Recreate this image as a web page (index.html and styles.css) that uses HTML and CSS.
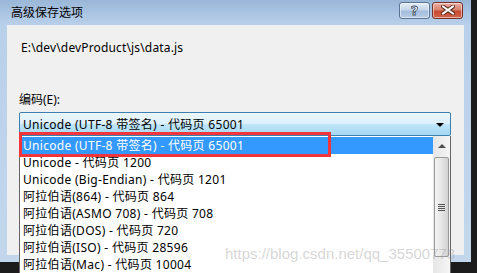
FILE: index.html
```html
<!DOCTYPE html>
<html>
<head>
    <title>高级保存选项</title>
    <link rel="stylesheet" href="styles.css">
</head>
<body>
    <div class="window">
        <div class="titlebar">
            <span class="title">高级保存选项</span>
            <div class="caption-buttons">
                <button class="cap-btn help-btn"><span>?</span></button>
                <button class="cap-btn close-btn">
                    <svg width="14" height="10" viewBox="0 0 14 10">
                        <path d="M2 1.5 L12 8.5 M12 1.5 L2 8.5" stroke="#5a2a22" stroke-width="4" stroke-linecap="square"/>
                        <path d="M2 1.5 L12 8.5 M12 1.5 L2 8.5" stroke="#fff" stroke-width="2" stroke-linecap="square"/>
                    </svg>
                </button>
            </div>
        </div>
        <div class="client">
            <div class="path">E:\dev\devProduct\js\data.js</div>
            <div class="label">编码(E):</div>
            <div class="combo-wrap">
                <div class="combo">
                    <span>Unicode (UTF-8 带签名) - 代码页 65001</span>
                    <span class="arrow"></span>
                </div>
                <div class="dropdown">
                    <ul class="options">
                        <li class="selected">Unicode (UTF-8 带签名) - 代码页 65001</li>
                        <li>Unicode - 代码页 1200</li>
                        <li>Unicode (Big-Endian) - 代码页 1201</li>
                        <li>阿拉伯语(864) - 代码页 864</li>
                        <li>阿拉伯语(ASMO 708) - 代码页 708</li>
                        <li>阿拉伯语(DOS) - 代码页 720</li>
                        <li>阿拉伯语(ISO) - 代码页 28596</li>
                        <li>阿拉伯语(Mac) - 代码页 10004</li>
                    </ul>
                    <div class="scrollbar">
                        <div class="scroll-up"><span class="up-arrow"></span></div>
                        <div class="thumb"><span class="grip"></span></div>
                    </div>
                </div>
                <div class="mark"></div>
            </div>
        </div>
    </div>
    <div class="watermark">https://blog.csdn.net/qq_35500778</div>
</body>
</html>
```

FILE: styles.css
```css
body {
    margin: 0;
    padding: 0;
    width: 477px;
    height: 273px;
    overflow: hidden;
    background-color: #1c1c1c;
    font-family: "Noto Sans", "Noto Sans CJK SC", sans-serif;
    font-size: 12px;
    position: relative;
}

.window {
    width: 457px;
    height: 255px;
    padding: 0 7px 7px 7px;
    background: linear-gradient(to bottom, #9ab7d8 0px, #b9d0ea 25px, #c3d7ec 100%);
}

.titlebar {
    height: 25px;
    display: flex;
    align-items: center;
    justify-content: space-between;
}

.title {
    margin-left: 4px;
    margin-top: -2px;
    color: #000;
    font-family: "Noto Sans CJK SC", sans-serif;
    font-size: 12px;
}

.caption-buttons {
    display: flex;
    gap: 2px;
    margin-top: -5px;
    margin-right: 1px;
}

.cap-btn {
    width: 31px;
    height: 17px;
    padding: 0;
    border-radius: 3px;
    display: flex;
    align-items: center;
    justify-content: center;
    box-shadow: inset 0 0 0 1px rgba(255, 255, 255, 0.5);
}

.help-btn {
    border: 1px solid #5a7394;
    background: linear-gradient(to bottom, #e6eef7 0%, #c5d6ea 45%, #a3bddd 55%, #b8cde6 100%);
}

.help-btn span {
    color: #fff;
    font-family: "DejaVu Sans", sans-serif;
    font-weight: bold;
    font-size: 13px;
    line-height: 13px;
    -webkit-text-stroke: 0.8px #3a4a60;
}

.close-btn {
    border: 1px solid #7a3024;
    background: linear-gradient(to bottom, #ebb0a3 0%, #d9826f 45%, #c9472f 55%, #d0654c 100%);
}

.client {
    height: 230px;
    background-color: #f0f0f0;
    padding: 0 13px 0 12px;
}

.path {
    padding-top: 15px;
    padding-left: 2px;
    line-height: 16px;
    letter-spacing: 0.15px;
    color: #000;
}

.label {
    margin-top: 36px;
    line-height: 16px;
    color: #000;
}

.combo-wrap {
    position: relative;
    margin-top: 4px;
    letter-spacing: 0.3px;
}

.combo {
    height: 22px;
    border: 1px solid #3c7fb1;
    border-radius: 2px;
    background: linear-gradient(to bottom, #ecf7fd 0%, #dcf0fc 48%, #bee5f8 52%, #a6d8f2 100%);
    display: flex;
    align-items: center;
    justify-content: space-between;
    padding: 0 6px 0 3px;
}

.arrow {
    width: 0;
    height: 0;
    border-left: 4px solid transparent;
    border-right: 4px solid transparent;
    border-top: 4px solid #000;
    margin-top: 1px;
}

.dropdown {
    position: absolute;
    top: 24px;
    left: 0;
    width: 430px;
    height: 140px;
    border: 1px solid #646464;
    border-top: 0;
    background-color: #fff;
    display: flex;
}

.options {
    list-style-type: none;
    margin: 0;
    padding: 1px 0 0 0;
    flex: 1;
}

.options li {
    height: 17px;
    line-height: 17px;
    padding-left: 3px;
    color: #000;
    white-space: nowrap;
}

.options li.selected {
    background-color: #3399ff;
    color: #fff;
}

.scrollbar {
    width: 17px;
    background: linear-gradient(to right, #e6e6e6, #f5f5f5);
    display: flex;
    flex-direction: column;
    padding-top: 1px;
}

.scroll-up {
    height: 18px;
    display: flex;
    align-items: center;
    justify-content: center;
}

.up-arrow {
    width: 0;
    height: 0;
    border-left: 4px solid transparent;
    border-right: 4px solid transparent;
    border-bottom: 4px solid #4d4d4d;
}

.thumb {
    margin: 2px 1px 0 1px;
    height: 98px;
    border: 1px solid #9a9a9a;
    border-radius: 2px;
    background: linear-gradient(to right, #f4f4f4, #e6e6e6 50%, #d2d2d2);
    display: flex;
    align-items: center;
    justify-content: center;
}

.grip {
    width: 7px;
    height: 7px;
    background: repeating-linear-gradient(to bottom, #555 0px, #555 1px, transparent 1px, transparent 2px);
}

.mark {
    position: absolute;
    top: 20px;
    left: 0;
    width: 306px;
    height: 19px;
    border: 3px solid #f2353b;
}

.watermark {
    position: absolute;
    left: 225px;
    top: 245px;
    font-family: "Liberation Sans", Arial, sans-serif;
    font-size: 15px;
    line-height: 18px;
    color: rgba(150, 150, 150, 0.4);
    white-space: nowrap;
}
```
